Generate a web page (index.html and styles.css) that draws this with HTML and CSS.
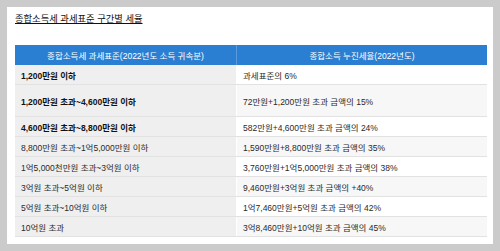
FILE: index.html
```html
<!DOCTYPE html>
<html lang="ko">
<head>
<meta charset="utf-8">
<link rel="stylesheet" href="styles.css">
</head>
<body>
<div class="panel">
  <h2 class="title">종합소득세 과세표준 구간별 세율</h2>
  <table class="tax">
    <thead>
      <tr><th>종합소득세 과세표준(2022년도 소득 귀속분)</th><th>종합소득 누진세율(2022년도)</th></tr>
    </thead>
    <tbody>
      <tr class="r1"><td class="b">1,200만원 이하</td><td>과세표준의 6%</td></tr>
      <tr class="r2 tall"><td class="b">1,200만원 초과~4,600만원 이하</td><td>72만원+1,200만원 초과 금액의 15%</td></tr>
      <tr class="r1"><td class="b">4,600만원 초과~8,800만원 이하</td><td>582만원+4,600만원 초과 금액의 24%</td></tr>
      <tr class="r2"><td>8,800만원 초과~1억5,000만원 이하</td><td>1,590만원+8,800만원 초과 금액의 35%</td></tr>
      <tr class="r1"><td>1억5,000천만원 초과~3억원 이하</td><td>3,760만원+1억5,000만원 초과 금액의 38%</td></tr>
      <tr class="r2"><td>3억원 초과~5억원 이하</td><td>9,460만원+3억원 초과 금액의 +40%</td></tr>
      <tr class="r1"><td>5억원 초과~10억원 이하</td><td>1억7,460만원+5억원 초과 금액의 42%</td></tr>
      <tr class="r2"><td>10억원 초과</td><td>3억8,460만원+10억원 초과 금액의 45%</td></tr>
    </tbody>
  </table>
</div>
</body>
</html>
```

FILE: styles.css
```css
html, body {
  margin: 0;
  padding: 0;
  background: #cbcbcb;
}
body {
  padding: 7px;
  font-family: "Liberation Sans", "Noto Sans CJK KR", sans-serif;
  color: #222;
}
.panel {
  background: #fff;
  width: 486px;
  height: 237px;
  box-sizing: border-box;
  padding: 0 6px 6px 8px;
}
.title {
  margin: 0;
  height: 38px;
  padding-top: 7px;
  box-sizing: border-box;
  font-size: 9.3px;
  font-weight: normal;
  text-decoration: underline;
  line-height: 11px;
  color: #111;
}
.tax {
  width: 472px;
  border-collapse: collapse;
  font-size: 8.5px;
  table-layout: fixed;
}
.tax th {
  background: #2a7fd2;
  color: #fff;
  font-weight: normal;
  height: 20px;
  padding: 0;
  text-align: center;
  border-right: 1px solid #5a9be0;
}
.tax th:first-child { width: 221px; }
.tax th:last-child { border-right: none; }
.tax td {
  height: 19px;
  padding: 0 0 0 6px;
  border-bottom: 1px solid #e2e2e2;
  color: #2a2a2a;
}
.tax td:first-child {
  background: #efefef;
  border-right: 1px solid #fff;
}
.tax tr.r2 td:last-child { background: #f7f7f7; }
.tax tr.tall td { height: 31px; }
.tax td.b { font-weight: bold; color: #111; }
```
